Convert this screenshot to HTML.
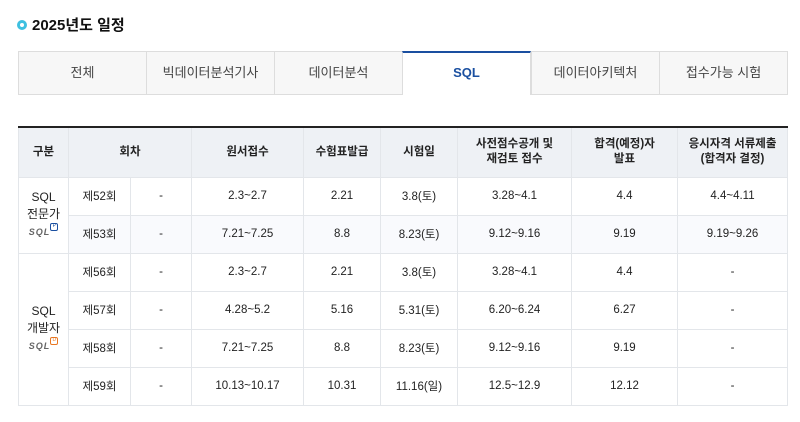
<!DOCTYPE html>
<html><head><meta charset="utf-8"><style>
*{margin:0;padding:0;box-sizing:border-box}
body{width:800px;height:422px;background:#fff;font-family:"Liberation Sans","Noto Sans CJK KR",sans-serif;color:#222;position:relative;overflow:hidden}
.title{position:absolute;left:17px;top:14px;font-size:15px;font-weight:bold;color:#111;display:flex;align-items:center}
.dot{width:10px;height:10px;border-radius:50%;border:3px solid #3ec0e0;margin-right:5px}
.tabs{position:absolute;left:18px;top:51px;width:770px;height:44px;display:flex;border:1px solid #ddd;border-top:none;background:#f7f7f7}
.tab{flex:1;border-top:1px solid #ddd;border-left:1px solid #ddd;text-align:center;line-height:42px;font-size:13px;color:#444}
.tab:first-child{border-left:none}
.tab.on{background:#fff;border-top:2px solid #1a4fa0;color:#1a4fa0;font-weight:bold;line-height:40px;margin-bottom:-1px;height:44px;border-right:1px solid #ddd}
table{position:absolute;left:18px;top:126px;width:770px;border-collapse:collapse;table-layout:fixed;border-top:2px solid #222}
td,th{border:1px solid #e3e6ea;text-align:center;font-size:11.5px;font-weight:normal;height:38px;color:#222}
th{background:#eef1f5;font-weight:bold;height:50px;font-size:11.5px;line-height:15px}
tr.alt td{background:#f9fafd}
td.g{background:#fff!important;line-height:17px;font-size:12px}
.logo{font-size:9px;font-style:italic;font-weight:bold;color:#666;letter-spacing:1px}
.p{display:inline-block;width:8px;height:8px;border:1.5px solid #1a4fa0;border-radius:2px;font-size:5px;line-height:5px;color:#1a4fa0;vertical-align:top;font-style:normal}
.p.o{border-color:#e87722;color:#e87722}
</style></head><body>
<div class="title"><span class="dot"></span>2025년도 일정</div>
<div class="tabs">
<div class="tab">전체</div><div class="tab">빅데이터분석기사</div><div class="tab">데이터분석</div><div class="tab on">SQL</div><div class="tab">데이터아키텍처</div><div class="tab">접수가능 시험</div>
</div>
<table>
<colgroup><col style="width:50px"><col style="width:62px"><col style="width:61px"><col style="width:112px"><col style="width:77px"><col style="width:77px"><col style="width:114px"><col style="width:106px"><col style="width:110px"></colgroup>
<tr><th>구분</th><th colspan="2">회차</th><th>원서접수</th><th>수험표발급</th><th>시험일</th><th>사전점수공개 및<br>재검토 접수</th><th>합격(예정)자<br>발표</th><th>응시자격 서류제출<br>(합격자 결정)</th></tr>
<tr><td class="g" rowspan="2">SQL<br>전문가<br><span class="logo">SQL</span><span class="p">P</span></td><td>제52회</td><td>-</td><td>2.3~2.7</td><td>2.21</td><td>3.8(토)</td><td>3.28~4.1</td><td>4.4</td><td>4.4~4.11</td></tr>
<tr class="alt"><td>제53회</td><td>-</td><td>7.21~7.25</td><td>8.8</td><td>8.23(토)</td><td>9.12~9.16</td><td>9.19</td><td>9.19~9.26</td></tr>
<tr><td class="g" rowspan="4">SQL<br>개발자<br><span class="logo">SQL</span><span class="p o">D</span></td><td>제56회</td><td>-</td><td>2.3~2.7</td><td>2.21</td><td>3.8(토)</td><td>3.28~4.1</td><td>4.4</td><td>-</td></tr>
<tr><td>제57회</td><td>-</td><td>4.28~5.2</td><td>5.16</td><td>5.31(토)</td><td>6.20~6.24</td><td>6.27</td><td>-</td></tr>
<tr><td>제58회</td><td>-</td><td>7.21~7.25</td><td>8.8</td><td>8.23(토)</td><td>9.12~9.16</td><td>9.19</td><td>-</td></tr>
<tr><td>제59회</td><td>-</td><td>10.13~10.17</td><td>10.31</td><td>11.16(일)</td><td>12.5~12.9</td><td>12.12</td><td>-</td></tr>
</table>
</body></html>
